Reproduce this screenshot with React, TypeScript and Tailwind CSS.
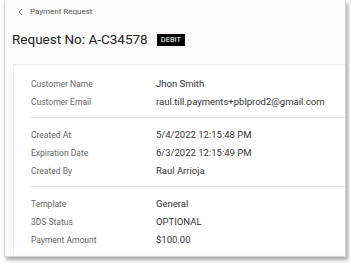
import React from 'react';

type Row = { label: string; value: string };

const sections: Row[][] = [
  [
    { label: 'Customer Name', value: 'Jhon Smith' },
    { label: 'Customer Email', value: 'raul.till.payments+pblprod2@gmail.com' },
  ],
  [
    { label: 'Created At', value: '5/4/2022 12:15:48 PM' },
    { label: 'Expiration Date', value: '6/3/2022 12:15:49 PM' },
    { label: 'Created By', value: 'Raul Arrioja' },
  ],
  [
    { label: 'Template', value: 'General' },
    { label: '3DS Status', value: 'OPTIONAL' },
    { label: 'Payment Amount', value: '$100.00' },
  ],
];

const App: React.FC = () => {
  return (
    <div className="w-[351px] h-[269px] bg-white overflow-hidden" style={{ fontFamily: 'Roboto, "Noto Sans", sans-serif' }}>
      <div className="ml-[4px] w-[342px] h-[257px] bg-[#fafafa] border-x border-b border-[#d4d4d4] shadow-[2px_3px_4px_rgba(0,0,0,0.35)] flex flex-col">
        <div className="flex items-center h-[23px] pl-[12px] text-[8px] text-[#555]">
          <svg width="8" height="8" viewBox="0 0 8 8" className="mr-[5px]">
            <path d="M5 1 L2 4 L5 7" fill="none" stroke="#555" strokeWidth="0.9" />
          </svg>
          <span>Payment Request</span>
        </div>
        <div className="flex items-center h-[28px] pl-[7px] mt-[3px]">
          <h1 className="text-[13.5px] text-[#222] leading-none">Request No: A-C34578</h1>
          <span className="ml-[9px] bg-black text-white text-[7.5px] leading-none px-[4px] py-[2.5px]">DEBIT</span>
        </div>
        <div className="ml-[8px] mt-[10px] flex-1 mb-[1px] bg-white border-l border-t border-[#ececec] pl-[17px] pt-[10px]">
          {sections.map((rows, i) => (
            <div key={i} className={i > 0 ? 'border-t border-[#e8e8e8] pt-[8px] mt-[6px]' : ''}>
              {rows.map((r) => (
                <div key={r.label} className="flex items-center h-[18px]">
                  <span className="w-[125px] text-[8.5px] text-[#666]">{r.label}</span>
                  <span className="text-[9.5px] text-[#333]">{r.value}</span>
                </div>
              ))}
            </div>
          ))}
        </div>
      </div>
    </div>
  );
};

export default App;
